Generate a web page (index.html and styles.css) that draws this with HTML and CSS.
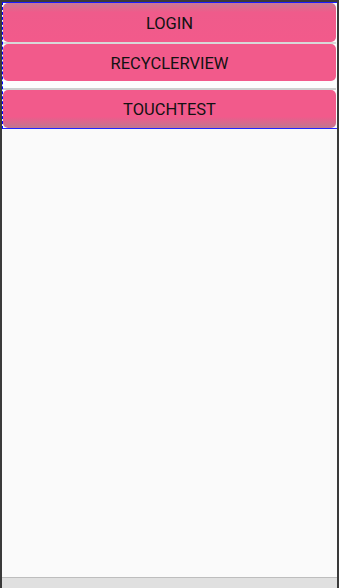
FILE: index.html
```html
<!DOCTYPE html>
<html>
<head>
<meta charset="utf-8">
<link rel="stylesheet" href="styles.css">
</head>
<body>
<div class="frame">
  <div class="screen">
    <div class="list">
      <div class="btn btn-top">LOGIN</div>
      <div class="sep"></div>
      <div class="btn btn-mid">RECYCLERVIEW</div>
      <div class="gap"></div>
      <div class="btn btn-bottom">TOUCHTEST</div>
    </div>
    <div class="filler"></div>
    <div class="navbar"></div>
  </div>
</div>
</body>
</html>
```
FILE: styles.css
```css
html, body {
  margin: 0;
  padding: 0;
  width: 339px;
  height: 588px;
  overflow: hidden;
}
body {
  background: #3a3a3a;
  font-family: Roboto, "Liberation Sans", sans-serif;
}
.frame {
  box-sizing: border-box;
  width: 339px;
  height: 588px;
  padding: 2px 2px 0 2px;
  background: #3a3a3a;
}
.screen {
  height: 586px;
  background: #fafafa;
  display: flex;
  flex-direction: column;
}
.list {
  border-top: 1px solid #1a1aff;
  border-left: 1px dashed #0000ff;
  border-bottom: 1px solid #2222ff;
  display: flex;
  flex-direction: column;
  padding-right: 1px;
}
.btn {
  height: 38px;
  display: flex;
  align-items: center;
  justify-content: center;
  padding-top: 1px;
  box-sizing: border-box;
  background: #f25a8b;
  color: #121212;
  font-size: 16.5px;
  font-weight: 400;
  border-radius: 5px;
}
.btn-top {
  height: 39px;
  background: linear-gradient(#c77a92 0px, #ef5b8b 9px, #f25a8b 100%);
}
.sep {
  height: 2px;
  background: #d8d8d8;
}
.btn-mid {
  height: 37px;
}
.gap {
  height: 7px;
  background: #fdfdfd;
  border-bottom: 2px solid #cfcfcf;
}
.btn-bottom {
  height: 38px;
  background: linear-gradient(#f25a8b 0, #f25a8b 70%, #c07690 100%);
}
.filler {
  flex: 1;
}
.navbar {
  height: 10px;
  background: #e0e0e0;
  border-top: 1px solid #bdbdbd;
}
```
